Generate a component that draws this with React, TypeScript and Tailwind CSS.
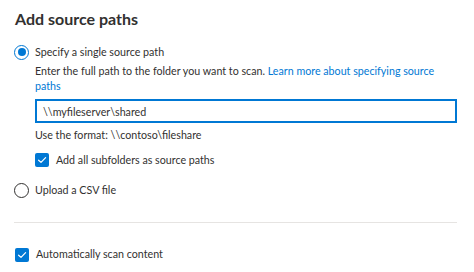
import React from "react";

const font = { fontFamily: '"Lato", "Liberation Sans", sans-serif' };

function Check() {
  return (
    <span className="flex h-[14px] w-[14px] shrink-0 items-center justify-center rounded-[2px] bg-[#0078d4]">
      <svg width="10" height="10" viewBox="0 0 10 10" fill="none">
        <path d="M1.6 5.2 L4 7.4 L8.6 2.6" stroke="white" strokeWidth="1.2" strokeLinecap="round" strokeLinejoin="round" />
      </svg>
    </span>
  );
}

export default function App() {
  return (
    <div className="h-[272px] w-[474px] overflow-hidden bg-white text-[#323130]" style={font}>
      <div className="flex flex-col pl-[14px] pr-[17px]">
        <h2 className="ml-[1px] mt-[8px] text-[16px] font-bold leading-[22px]">Add source paths</h2>

        <div className="mt-[14px] flex h-[16px] items-center gap-[6px] text-[10.7px]">
          <span className="flex h-[15px] w-[15px] shrink-0 items-center justify-center rounded-full border border-[#0078d4]">
            <span className="h-[8px] w-[8px] rounded-full bg-[#0078d4]" />
          </span>
          <span>Specify a single source path</span>
        </div>

        <div className="flex flex-col pl-[21px] text-[10.7px] leading-[15px]">
          <p className="mt-[3px]">
            Enter the full path to the folder you want to scan.{" "}
            <span className="text-[#0078d4]">Learn more about specifying source paths</span>
          </p>
          <div className="mt-[6px] flex h-[24px] items-center border-2 border-[#0078d4] px-[6px]">
            \\myfileserver\shared
          </div>
          <p className="mt-[4px]">Use the format: \\contoso\fileshare</p>
          <div className="mt-[10px] flex h-[15px] items-center gap-[7px]">
            <Check />
            <span>Add all subfolders as source paths</span>
          </div>
        </div>

        <div className="mt-[15px] flex h-[16px] items-center gap-[6px] text-[10.7px]">
          <span className="h-[15px] w-[15px] shrink-0 rounded-full border border-[#323130]" />
          <span>Upload a CSV file</span>
        </div>

        <div className="mt-[24px] h-px bg-[#e6e4e2]" />

        <div className="ml-[1px] mt-[24px] flex h-[15px] items-center gap-[7px] text-[10.7px]">
          <Check />
          <span>Automatically scan content</span>
        </div>
      </div>
    </div>
  );
}
